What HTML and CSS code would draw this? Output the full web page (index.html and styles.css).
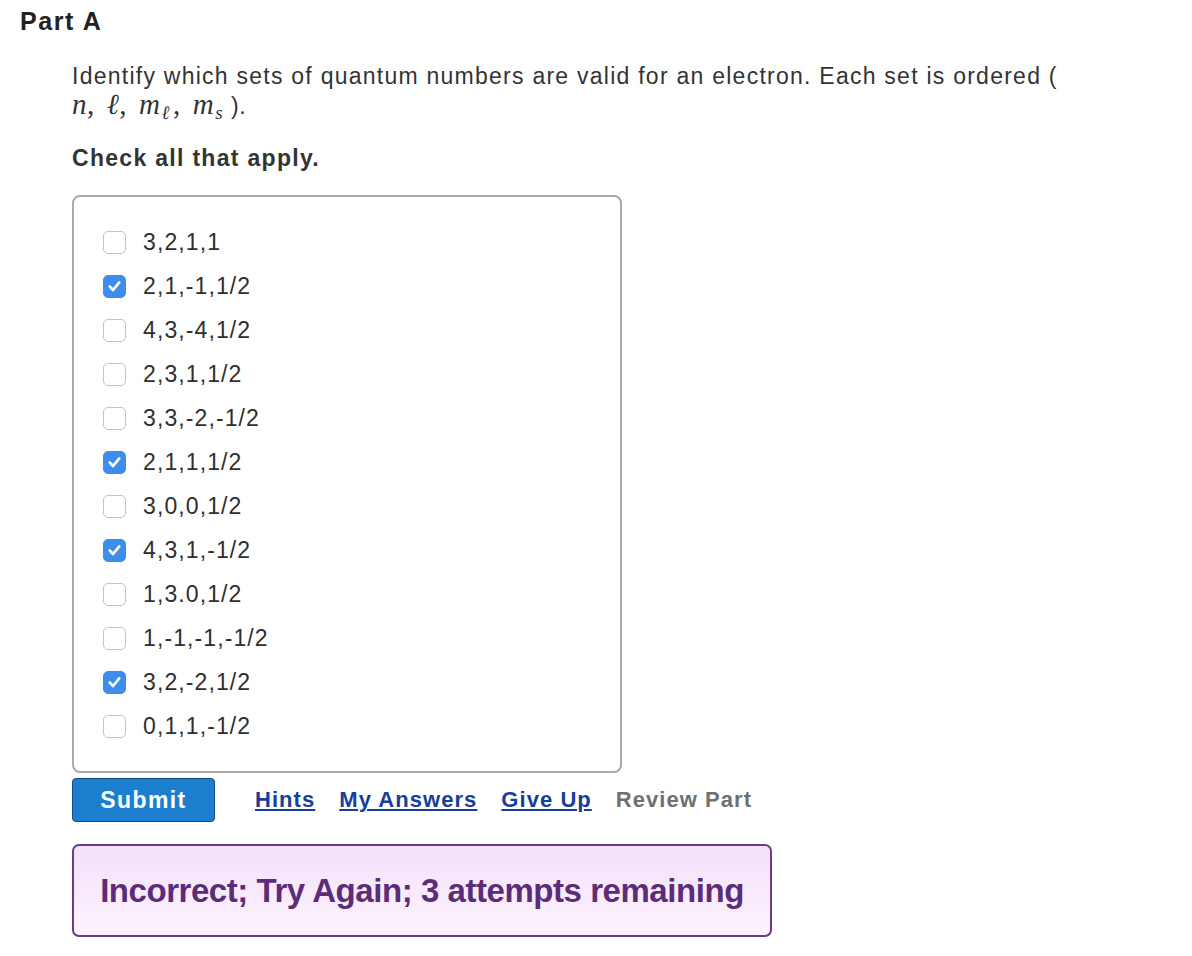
FILE: index.html
```html
<!DOCTYPE html>
<html>
<head>
<meta charset="utf-8">
<link rel="stylesheet" href="styles.css">
</head>
<body>
<div class="page">
  <h2 class="part-title">Part A</h2>
  <div class="part-body">
    <p class="prompt">Identify which sets of quantum numbers are valid for an electron. Each set is ordered (<br><span class="math"><i>n</i>,<span class="sp"></span><i>ℓ</i>,<span class="sp"></span><i>m</i><sub><i>ℓ</i></sub>,<span class="sp"></span><i>m</i><sub><i>s</i></sub></span><span class="close">).</span></p>
    <p class="instr">Check all that apply.</p>
    <div class="choices">
      <label class="choice"><span class="cb"></span><span class="lbl">3,2,1,1</span></label>
      <label class="choice"><span class="cb checked"><svg viewBox="0 0 22 22" width="22" height="22"><path d="M6 11.5 L9.5 15.2 L16 7.3" fill="none" stroke="#fff" stroke-width="2.8" stroke-linecap="round" stroke-linejoin="round"/></svg></span><span class="lbl">2,1,-1,1/2</span></label>
      <label class="choice"><span class="cb"></span><span class="lbl">4,3,-4,1/2</span></label>
      <label class="choice"><span class="cb"></span><span class="lbl">2,3,1,1/2</span></label>
      <label class="choice"><span class="cb"></span><span class="lbl">3,3,-2,-1/2</span></label>
      <label class="choice"><span class="cb checked"><svg viewBox="0 0 22 22" width="22" height="22"><path d="M6 11.5 L9.5 15.2 L16 7.3" fill="none" stroke="#fff" stroke-width="2.8" stroke-linecap="round" stroke-linejoin="round"/></svg></span><span class="lbl">2,1,1,1/2</span></label>
      <label class="choice"><span class="cb"></span><span class="lbl">3,0,0,1/2</span></label>
      <label class="choice"><span class="cb checked"><svg viewBox="0 0 22 22" width="22" height="22"><path d="M6 11.5 L9.5 15.2 L16 7.3" fill="none" stroke="#fff" stroke-width="2.8" stroke-linecap="round" stroke-linejoin="round"/></svg></span><span class="lbl">4,3,1,-1/2</span></label>
      <label class="choice"><span class="cb"></span><span class="lbl">1,3.0,1/2</span></label>
      <label class="choice"><span class="cb"></span><span class="lbl">1,-1,-1,-1/2</span></label>
      <label class="choice"><span class="cb checked"><svg viewBox="0 0 22 22" width="22" height="22"><path d="M6 11.5 L9.5 15.2 L16 7.3" fill="none" stroke="#fff" stroke-width="2.8" stroke-linecap="round" stroke-linejoin="round"/></svg></span><span class="lbl">3,2,-2,1/2</span></label>
      <label class="choice"><span class="cb"></span><span class="lbl">0,1,1,-1/2</span></label>
    </div>
    <div class="actions">
      <button class="submit">Submit</button>
      <a class="link" href="#">Hints</a>
      <a class="link" href="#">My Answers</a>
      <a class="link" href="#">Give Up</a>
      <span class="review">Review Part</span>
    </div>
    <div class="feedback">Incorrect; Try Again; 3 attempts remaining</div>
  </div>
</div>
</body>
</html>
```
FILE: styles.css
```css
html, body {
  margin: 0;
  padding: 0;
  background: #fff;
}
body {
  font-family: "Liberation Sans", Arial, sans-serif;
  color: #333;
}
.page {
  padding: 6px 20px 20px 20px;
}
.part-title {
  margin: 0;
  font-size: 25px;
  letter-spacing: 1.6px;
  font-weight: bold;
  color: #222;
  line-height: 30px;
}
.part-body {
  padding-left: 52px;
  padding-top: 25px;
}
.prompt {
  margin: 0;
  font-size: 23px;
  letter-spacing: 1.25px;
  line-height: 30px;
}
.math {
  font-family: "Liberation Serif", "DejaVu Serif", serif;
  font-size: 29px;
  line-height: 20px;
  letter-spacing: 0.5px;
  color: #333;
}
.math i {
  font-style: italic;
}
.math .sp {
  display: inline-block;
  width: 12px;
}
.math sub {
  font-size: 19px;
  vertical-align: -5px;
  line-height: 0;
  margin-left: 1px;
  margin-right: 3px;
}
.close {
  margin-left: 5px;
  letter-spacing: 0.5px;
}
.instr {
  margin: 22px 0 0 0;
  font-size: 23px;
  letter-spacing: 1.3px;
  font-weight: bold;
  line-height: 30px;
}
.choices {
  margin-top: 22px;
  border: 2px solid #aaa;
  border-radius: 8px;
  padding: 23px 0 23px 29px;
  box-sizing: border-box;
  width: 550px;
  display: flex;
  flex-direction: column;
}
.choice {
  display: flex;
  align-items: center;
  height: 44px;
  font-size: 23px;
  letter-spacing: 1.1px;
  color: #2e2e2e;
}
.cb {
  width: 23px;
  height: 23px;
  box-sizing: border-box;
  border: 1px solid #c4c4c4;
  border-radius: 5px;
  background: #fff;
  flex: none;
  display: flex;
  align-items: center;
  justify-content: center;
}
.cb.checked {
  background: #3b8eec;
  border-color: #3b8eec;
}
.cb svg { display: block; }
.lbl {
  margin-left: 17px;
}
.actions {
  margin-top: 5px;
  display: flex;
  align-items: center;
  height: 44px;
}
.submit {
  width: 143px;
  height: 44px;
  box-sizing: border-box;
  background: #1b7ecf;
  border: 1px solid #124d83;
  border-radius: 4px;
  color: #fff;
  font-family: "Liberation Sans", Arial, sans-serif;
  font-weight: bold;
  font-size: 23px;
  letter-spacing: 1.4px;
  margin-right: 40px;
  padding: 0;
}
.link {
  font-size: 22px;
  letter-spacing: 1.05px;
  font-weight: bold;
  color: #173e9b;
  text-decoration: underline;
  margin-right: 24px;
}
.review {
  font-size: 22px;
  letter-spacing: 1.05px;
  font-weight: bold;
  color: #707070;
}
.feedback {
  margin-top: 22px;
  width: 700px;
  height: 93px;
  box-sizing: border-box;
  border: 2px solid #6a3a8c;
  border-radius: 7px;
  background: linear-gradient(to bottom, #f3e0fb, #fdf3fd);
  color: #5a2c7a;
  font-size: 33px;
  letter-spacing: -0.45px;
  font-weight: bold;
  display: flex;
  align-items: center;
  justify-content: center;
}
```
